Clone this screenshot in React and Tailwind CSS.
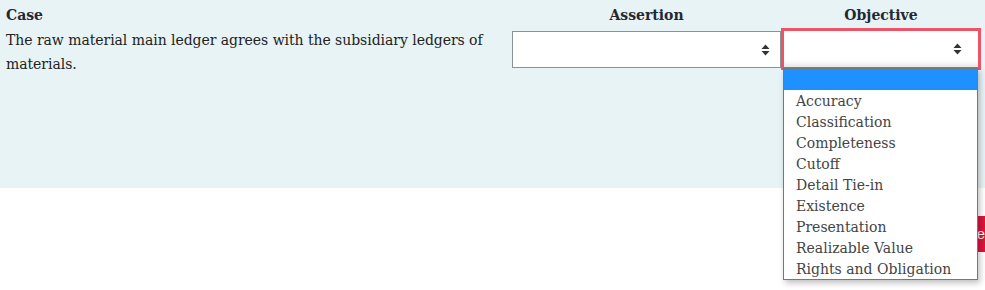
import { useState } from "react";

const objectives = [
  "Accuracy",
  "Classification",
  "Completeness",
  "Cutoff",
  "Detail Tie-in",
  "Existence",
  "Presentation",
  "Realizable Value",
  "Rights and Obligation",
];

const Arrows = () => (
  <svg width="9" height="12" viewBox="0 0 9 12" className="shrink-0">
    <path d="M4.5 0.5 L8.5 5 L0.5 5 Z" fill="#333" />
    <path d="M4.5 11.5 L8.5 7 L0.5 7 Z" fill="#333" />
  </svg>
);

const App = () => {
  const [open] = useState(true);

  return (
    <div
      className="w-[985px] h-[290px] overflow-hidden bg-white text-[#222]"
      style={{ fontFamily: '"DejaVu Serif", "Liberation Serif", serif' }}
    >
      <div className="bg-[#e8f3f5] h-[188px] flex pt-[5px]">
        {/* case column */}
        <div className="w-[506px] pl-[6px] pr-2">
          <div className="font-bold text-[14px] leading-[20px] text-[#1f2933]">Case</div>
          <p className="text-[14px] leading-[24px] mt-[3px] tracking-[-0.05px]">
            The raw material main ledger agrees with the subsidiary ledgers of materials.
          </p>
        </div>

        {/* assertion column */}
        <div className="w-[275px] pl-[6px] flex flex-col">
          <div className="font-bold text-[14px] leading-[20px] text-center text-[#1f2933]">
            Assertion
          </div>
          <div className="mt-[6px] h-[37px] bg-white border border-[#8a9199] flex items-center justify-end pr-[10px]">
            <Arrows />
          </div>
        </div>

        {/* objective column */}
        <div className="w-[200px] flex flex-col">
          <div className="font-bold text-[14px] leading-[20px] text-center text-[#1f2933]">
            Objective
          </div>
          <div className="relative mt-[3px]">
            <div className="h-[42px] border-[3px] border-[#ef5368] bg-white flex items-center justify-end pr-[16px] shadow-[inset_0_-6px_6px_-4px_rgba(0,0,0,0.12)]">
              <Arrows />
            </div>
            {open && (
              <ul className="absolute left-[2px] top-[40px] w-[195px] bg-white border border-[#777] shadow-[2px_3px_6px_rgba(0,0,0,0.25)] z-10 text-[14px] text-[#444]">
                <li className="h-[21px] bg-[#1e90ff]" />
                {objectives.map((o) => (
                  <li key={o} className="h-[21px] leading-[22px] pl-[12px] whitespace-nowrap">
                    {o}
                  </li>
                ))}
              </ul>
            )}
          </div>
        </div>
      </div>

      <div className="flex justify-end pt-[28px]">
        <button className="bg-[#dc143c] text-white h-[36px] px-3 mr-[-12px] text-[14px]">
          Save
        </button>
      </div>
    </div>
  );
};

export default App;
